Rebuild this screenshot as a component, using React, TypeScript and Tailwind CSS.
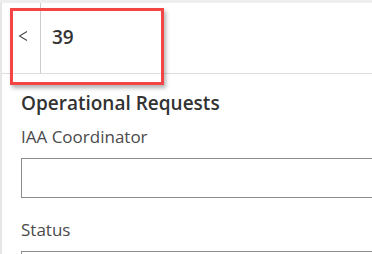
export default function App() {
  return (
    <div
      className="relative w-[372px] h-[254px] overflow-hidden bg-white"
      style={{ fontFamily: "'Open Sans', Lato, sans-serif" }}
    >
      <div className="h-[3px] bg-[#eeeeee]" />
      <div className="flex h-[251px]">
        <div className="w-[2px] shrink-0 bg-[#e6e6e6]" />
        <div className="flex-1 flex flex-col">
          <div className="flex shrink-0 h-[71px] border-b border-[#dddddd]">
            <div className="w-[39px] border-r border-[#cccccc] flex items-center justify-center pb-[4px] pl-[3px]">
              <svg width="10" height="12" viewBox="0 0 10 12" fill="none">
                <polyline points="9,1.5 1.5,6 9,10.5" stroke="#4a4a4a" strokeWidth="1.1" />
              </svg>
            </div>
            <div className="flex items-center pl-[11px] pb-[2px]">
              <span className="text-[19px] font-semibold text-[#323232] leading-none">39</span>
            </div>
          </div>
          <div className="pl-[19px] pt-[20px]">
            <div className="text-[19px] font-semibold text-[#323232] leading-none">Operational Requests</div>
            <div className="mt-[15px] text-[17px] text-[#4a4a4a] leading-none">IAA Coordinator</div>
            <div className="shrink-0 mt-[13px] h-[40px] border border-[#8c8c8c] border-r-0" />
            <div className="mt-[23px] text-[17px] text-[#4a4a4a] leading-none">Status</div>
            <div className="shrink-0 mt-[13px] h-[40px] border border-[#8c8c8c] border-r-0" />
          </div>
        </div>
      </div>
      <div className="absolute left-[10px] top-[8px] w-[154px] h-[77px] border-[3px] border-[#f44545] shadow-[2px_3px_4px_rgba(0,0,0,0.3)]" />
    </div>
  );
}
